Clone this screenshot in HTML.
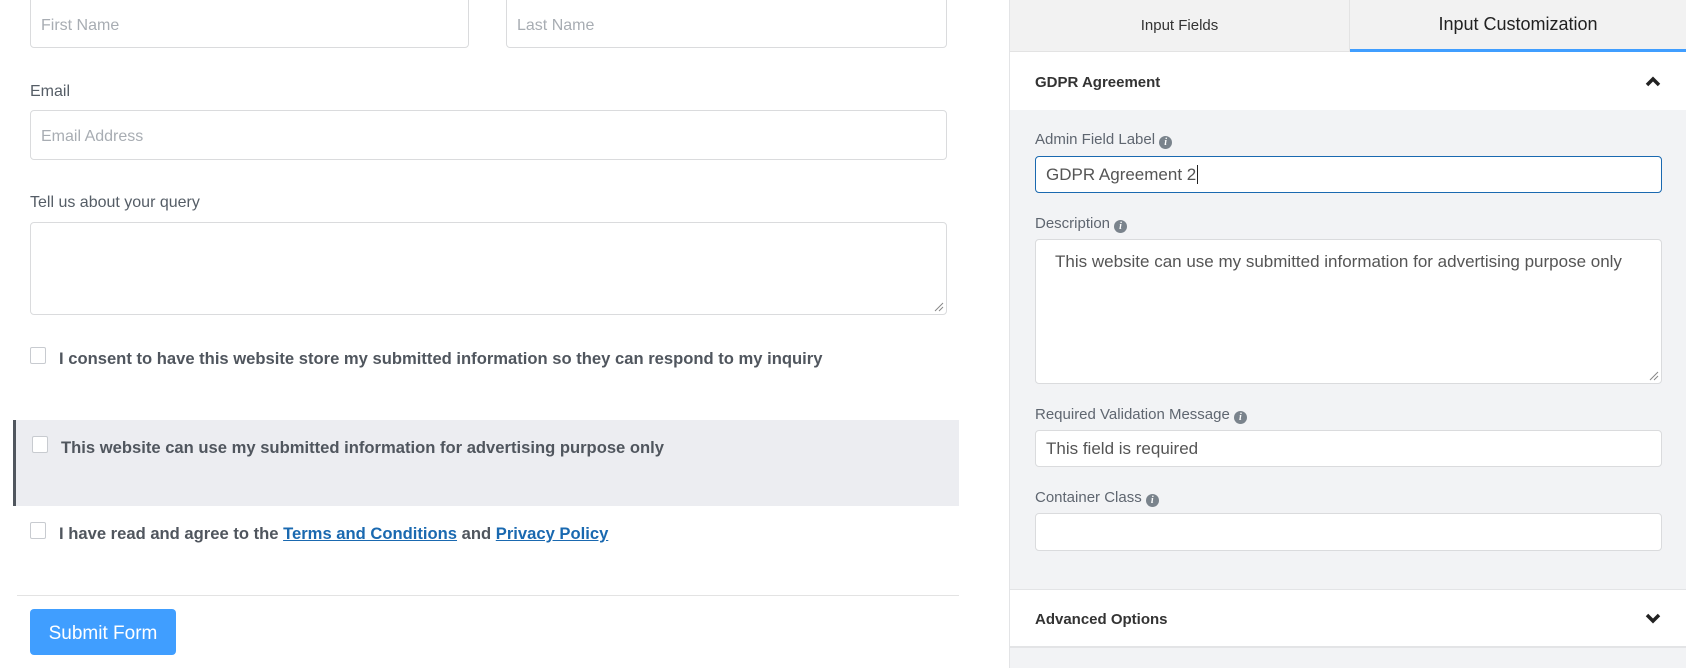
<!DOCTYPE html>
<html><head><style>
*{box-sizing:border-box;margin:0;padding:0}
body{width:1686px;height:668px;overflow:hidden;background:#fff;font-family:"Liberation Sans",sans-serif;color:#555d66;position:relative}
.a{position:absolute}
.inp{position:absolute;border:1px solid #dadbdd;border-radius:4px;background:#fff;font-size:16px;color:#a8adb3;padding-left:10px;display:flex;align-items:center}
.lbl{position:absolute;font-size:16px;color:#555d66}
.cb{position:absolute;width:16px;height:17px;border:1px solid #c8cbd0;border-radius:2px;background:#fff}
.ct{position:absolute;font-size:16.6px;font-weight:600;color:#50565e}
.rl{position:absolute;font-size:15px;color:#5f6670;left:1035px}
.info{display:inline-block;width:13px;height:13px;border-radius:50%;background:#7a838c;color:#fff;font-size:10px;font-style:italic;font-weight:bold;text-align:center;line-height:13px;vertical-align:-1px;margin-left:4px;font-family:"Liberation Serif",serif}
.ri{position:absolute;left:1035px;width:627px;background:#fff;border:1px solid #dadbdd;border-radius:4px;font-size:17px;color:#555;padding-left:10px}
a{color:#1a69b0}
</style></head><body>
<div class="inp" style="left:30px;top:-4px;width:439px;height:52px;padding-top:8px">First Name</div>
<div class="inp" style="left:506px;top:-4px;width:441px;height:52px;padding-top:8px">Last Name</div>
<div class="lbl" style="left:30px;top:83px">Email</div>
<div class="inp" style="left:30px;top:110px;width:917px;height:50px;padding-top:4px">Email Address</div>
<div class="lbl" style="left:30px;top:194px">Tell us about your query</div>
<div class="inp" style="left:30px;top:222px;width:917px;height:93px"></div>
<svg class="a" style="left:934px;top:302px" width="10" height="10"><path d="M1 9L9 1M5 9L9 5" stroke="#888" stroke-width="1"/></svg>
<div class="cb" style="left:30px;top:347px"></div>
<div class="ct" style="left:59px;top:349px">I consent to have this website store my submitted information so they can respond to my inquiry</div>
<div class="a" style="left:13px;top:420px;width:946px;height:86px;background:#ecedf1;border-left:3px solid #50565e"></div>
<div class="cb" style="left:32px;top:436px"></div>
<div class="ct" style="left:61px;top:438px">This website can use my submitted information for advertising purpose only</div>
<div class="cb" style="left:30px;top:522px"></div>
<div class="ct" style="left:59px;top:524px">I have read and agree to the <a href="#">Terms and Conditions</a> and <a href="#">Privacy Policy</a></div>
<div class="a" style="left:17px;top:595px;width:942px;height:1px;background:#e3e3e3"></div>
<div class="a" style="left:30px;top:609px;width:146px;height:46px;background:#409eff;border-radius:4px;color:#fff;font-size:19px;display:flex;align-items:center;justify-content:center;padding-top:3px">Submit Form</div>

<div class="a" style="left:1009px;top:0;width:677px;height:668px;background:#f2f3f5;border-left:1px solid #e3e4e6"></div>
<div class="a" style="left:1010px;top:0;width:340px;height:52px;background:#f2f2f2;border-bottom:1px solid #e3e3e3;border-right:1px solid #e3e3e3;font-size:15px;color:#333;display:flex;align-items:center;justify-content:center">Input Fields</div>
<div class="a" style="left:1350px;top:0;width:336px;height:52px;background:#f2f2f2;border-bottom:3px solid #409eff;font-size:18px;color:#222;display:flex;align-items:center;justify-content:center">Input Customization</div>
<div class="a" style="left:1010px;top:52px;width:676px;height:58px;background:#fff"></div>
<div class="a" style="left:1035px;top:74px;font-size:15px;font-weight:bold;color:#333">GDPR Agreement</div>
<svg class="a" style="left:1645px;top:76px" width="16" height="12"><path d="M2 9L8 3L14 9" stroke="#222" stroke-width="3.5" fill="none"/></svg>
<div class="rl" style="top:131px">Admin Field Label<span class="info">i</span></div>
<div class="ri" style="top:156px;height:37px;border-color:#1a69b0;line-height:35px;color:#555">GDPR Agreement 2<span style="border-left:1px solid #222;margin-left:1px"></span></div>
<div class="rl" style="top:215px">Description<span class="info">i</span></div>
<div class="ri" style="top:239px;height:145px;padding:12px 19px">This website can use my submitted information for advertising purpose only</div>
<svg class="a" style="left:1649px;top:371px" width="10" height="10"><path d="M1 9L9 1M5 9L9 5" stroke="#888" stroke-width="1"/></svg>
<div class="rl" style="top:406px">Required Validation Message<span class="info">i</span></div>
<div class="ri" style="top:430px;height:37px;line-height:35px">This field is required</div>
<div class="rl" style="top:489px">Container Class<span class="info">i</span></div>
<div class="ri" style="top:513px;height:38px"></div>
<div class="a" style="left:1010px;top:589px;width:676px;height:59px;background:#fff;border-top:1px solid #e3e4e6;border-bottom:2px solid #e3e4e6"></div>
<div class="a" style="left:1035px;top:611px;font-size:15px;font-weight:bold;color:#333">Advanced Options</div>
<svg class="a" style="left:1645px;top:612px" width="16" height="12"><path d="M2 3L8 9L14 3" stroke="#222" stroke-width="3.5" fill="none"/></svg>
</body></html>
